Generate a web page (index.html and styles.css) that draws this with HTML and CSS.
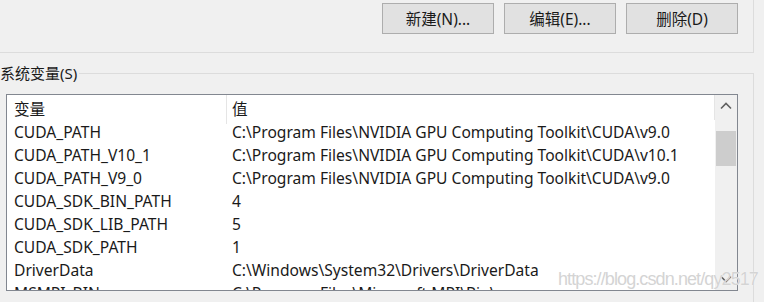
FILE: index.html
```html
<!DOCTYPE html>
<html lang="zh-CN">
<head>
    <meta charset="UTF-8">
    <title>环境变量</title>
    <link rel="stylesheet" href="styles.css">
</head>
<body>
    <div class="page">
        <div class="user-group">
            <div class="buttons">
                <button class="btn">新建(N)...</button>
                <button class="btn">编辑(E)...</button>
                <button class="btn">删除(D)</button>
            </div>
        </div>

        <fieldset class="sys-group">
            <legend>系统变量(S)</legend>
            <div class="listbox">
                <div class="list-body">
                    <div class="list-head">
                        <div class="col-name">变量</div>
                        <div class="col-value">值</div>
                    </div>
                    <div class="row"><div class="col-name">CUDA_PATH</div><div class="col-value">C:\Program Files\NVIDIA GPU Computing Toolkit\CUDA\v9.0</div></div>
                    <div class="row"><div class="col-name">CUDA_PATH_V10_1</div><div class="col-value">C:\Program Files\NVIDIA GPU Computing Toolkit\CUDA\v10.1</div></div>
                    <div class="row"><div class="col-name">CUDA_PATH_V9_0</div><div class="col-value">C:\Program Files\NVIDIA GPU Computing Toolkit\CUDA\v9.0</div></div>
                    <div class="row"><div class="col-name">CUDA_SDK_BIN_PATH</div><div class="col-value">4</div></div>
                    <div class="row"><div class="col-name">CUDA_SDK_LIB_PATH</div><div class="col-value">5</div></div>
                    <div class="row"><div class="col-name">CUDA_SDK_PATH</div><div class="col-value">1</div></div>
                    <div class="row"><div class="col-name">DriverData</div><div class="col-value">C:\Windows\System32\Drivers\DriverData</div></div>
                    <div class="row"><div class="col-name">MSMPI_BIN</div><div class="col-value">C:\Program Files\Microsoft MPI\Bin\</div></div>
                </div>
                <div class="scrollbar">
                    <svg class="arrow" width="12" height="8" viewBox="0 0 12 8"><path d="M1 6.5 L6 1.5 L11 6.5" fill="none" stroke="#606060" stroke-width="1.6"/></svg>
                    <div class="track"><div class="thumb"></div></div>
                    <svg class="arrow" width="12" height="8" viewBox="0 0 12 8"><path d="M1 1.5 L6 6.5 L11 1.5" fill="none" stroke="#606060" stroke-width="1.6"/></svg>
                </div>
            </div>
        </fieldset>

        <div class="watermark">https://blog.csdn.net/qy2517</div>
    </div>
</body>
</html>
```

FILE: styles.css
```css
/* Windows environment variables dialog (cropped) */
body {
    margin: 0;
    background-color: #f0f0f0;
    font-family: "Noto Sans", "Noto Sans CJK SC", sans-serif;
    font-size: 15.6px;
    color: #1a1a1a;
}

.page {
    position: relative;
    width: 764px;
    height: 302px;
    overflow: hidden;
}

.user-group {
    width: 754px;
    height: 53px;
    box-sizing: border-box;
    border-right: 1px solid #dcdcdc;
    border-bottom: 1px solid #dcdcdc;
}

.buttons {
    display: flex;
    justify-content: flex-end;
    gap: 10px;
    padding: 3px 15px 0 0;
}

.btn {
    width: 112px;
    height: 31px;
    background-color: #e1e1e1;
    border: 1px solid #adadad;
    font-family: inherit;
    font-size: 15.5px;
    color: #1a1a1a;
    padding: 0;
}

.sys-group {
    width: 754px;
    box-sizing: border-box;
    margin: 10px 0 0 0;
    padding: 11px 15px 0 6px;
    border: none;
    border-top: 1px solid #dcdcdc;
    border-right: 1px solid #dcdcdc;
    height: 260px;
}

.sys-group legend {
    padding: 0 2px 0 0;
    margin-left: -6px;
    line-height: 20px;
    font-size: 15px;
}

.listbox {
    display: flex;
    height: 197px;
    box-sizing: border-box;
    border: 1px solid #828790;
    background-color: #fff;
    overflow: hidden;
}

.list-body {
    flex: 1;
}

.list-head,
.row {
    display: grid;
    grid-template-columns: 220px 1fr;
    white-space: nowrap;
}

.list-head {
    height: 25px;
    line-height: 29px;
    border-right: 1px solid #e5e5e5;
}

.list-head .col-name {
    border-right: 1px solid #e5e5e5;
}

.row {
    height: 23px;
    line-height: 25px;
}

.col-name {
    padding-left: 7px;
}

.col-value {
    padding-left: 5px;
}

.scrollbar {
    width: 22px;
    background-color: #f0f0f0;
    display: flex;
    flex-direction: column;
    align-items: center;
}

.arrow {
    margin: 7px 0;
}

.track {
    flex: 1;
    width: 100%;
}

.thumb {
    height: 35px;
    margin: 14px 1px 0;
    background-color: #cdcdcd;
}

.watermark {
    position: absolute;
    left: 558px;
    top: 269px;
    font-family: "Liberation Sans", sans-serif;
    font-size: 18px;
    color: #d4d4d4;
    text-shadow: 0 0 1px #fff;
    letter-spacing: -0.9px;
}
```
